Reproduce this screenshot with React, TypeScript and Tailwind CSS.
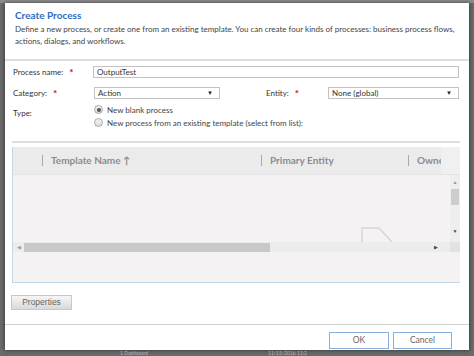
import React from "react"

const font = { fontFamily: 'Lato, "Open Sans", sans-serif' }

function Asterisk() {
  return <span className="ml-[6px] text-[10px] font-bold leading-none text-[#d01010]">*</span>
}

function SelectBox({ value, width }: { value: string; width: string }) {
  return (
    <div
      className={`flex h-[12px] items-center justify-between border border-[#c2c2c2] bg-white pl-[3px] pr-[6px] ${width}`}
    >
      <span className="text-[8px] leading-none text-[#333]">{value}</span>
      <span className="text-[6px] leading-none text-[#222]">▼</span>
    </div>
  )
}

function Radio({ checked, label }: { checked?: boolean; label: string }) {
  return (
    <div className="flex h-[13px] items-center">
      <span className="flex h-[9px] w-[9px] items-center justify-center rounded-full border border-[#a8a8a8] bg-gradient-to-b from-[#f4f4f4] to-[#dcdcdc]">
        {checked && <span className="h-[4px] w-[4px] rounded-full bg-[#555]" />}
      </span>
      <span className="ml-[4px] text-[8px] leading-none text-[#444]">{label}</span>
    </div>
  )
}

function HeaderCol({ label, width }: { label: string; width: string }) {
  return (
    <div className={`flex shrink-0 items-center ${width}`}>
      <span className="h-[11px] w-px bg-[#a9a9a9]" />
      <span className="ml-[8px] whitespace-nowrap text-[10px] font-bold text-[#8c8c8c]">{label}</span>
    </div>
  )
}

export default function App() {
  return (
    <div className="relative h-[356px] w-[474px] overflow-hidden bg-[#6a6a6a]" style={font}>
      {/* backdrop strip */}
      <div className="h-[3px] bg-[#8c8c8c]" />

      <div className="ml-[5px] flex h-[347px] w-[464px] flex-col bg-white shadow-[0_0_4px_rgba(0,0,0,0.6)]">
        {/* Title */}
        <div className="pl-[10px] pt-[4px]">
          <div className="text-[10px] font-bold leading-[16px] text-[#2f6cc0]">Create Process</div>
          <div className="text-[8px] leading-[12px] text-[#444]">
            <div className="whitespace-nowrap">
              Define a new process, or create one from an existing template. You can create four kinds of processes: business process flows,
            </div>
            <div className="whitespace-nowrap">actions, dialogs, and workflows.</div>
          </div>
        </div>

        <div className="mt-[12px] h-[2px] bg-[#dedede]" />

        {/* Form */}
        <div className="mt-[5px] flex h-[12px] items-center pl-[8px] pr-[10px]">
          <div className="flex w-[80px] items-center text-[8px] text-[#333]">
            Process name:
            <Asterisk />
          </div>
          <div className="flex h-[12px] flex-1 items-center border border-[#c2c2c2] bg-white pl-[3px]">
            <span className="text-[8px] leading-none text-[#333]">OutputTest</span>
          </div>
        </div>

        <div className="mt-[9px] flex h-[12px] items-center pl-[8px] pr-[10px]">
          <div className="flex w-[81px] items-center text-[8px] text-[#333]">
            Category:
            <Asterisk />
          </div>
          <SelectBox value="Action" width="w-[126px]" />
          <div className="ml-[46px] flex w-[62px] items-center text-[8px] text-[#333]">
            Entity:
            <Asterisk />
          </div>
          <SelectBox value="None (global)" width="flex-1" />
        </div>

        <div className="mt-[4px] flex pl-[8px]">
          <div className="w-[81px] pt-[6px] text-[8px] leading-none text-[#333]">Type:</div>
          <div className="flex flex-col">
            <Radio checked label="New blank process" />
            <Radio label="New process from an existing template (select from list):" />
          </div>
        </div>

        <div className="ml-[7px] mr-[9px] mt-[12px] h-[2px] bg-[#dedede]" />

        {/* Grid */}
        <div className="ml-[7px] mr-[9px] mt-[4px] flex h-[136px] flex-col border-b border-l border-[#c4d6ea] bg-[#f4f2f2]">
          <div className="flex h-[28px] shrink-0 border-b border-[#e3e3e3] bg-[#ebebeb]">
            <div className="flex w-[428px] overflow-hidden pl-[29px]">
              <HeaderCol label="Template Name ↑" width="w-[219px]" />
              <HeaderCol label="Primary Entity" width="w-[147px]" />
              <HeaderCol label="Owner" width="w-[60px]" />
            </div>
            <div className="flex-1 bg-[#f1f0f0]" />
          </div>

          <div className="relative flex h-[67px] shrink-0">
            <div className="relative flex-1 overflow-hidden">
              <svg className="absolute left-[348px] top-[52px]" width="32" height="16" viewBox="0 0 32 16">
                <path d="M1 16V1h17l13 14" fill="none" stroke="#d6d6d6" strokeWidth="1.5" />
              </svg>
            </div>
            <div className="flex w-[10px] flex-col items-center bg-[#eeeeee] pt-[5px]">
              <span className="text-[5px] leading-none text-[#9a9a9a]">▲</span>
              <div className="mt-[4px] h-[16px] w-[8px] bg-[#cdcdcd]" />
              <span className="mt-[24px] text-[5px] leading-none text-[#444]">▼</span>
            </div>
          </div>

          <div className="flex h-[10px] shrink-0 items-center bg-[#ececec]">
            <span className="ml-[4px] text-[5px] leading-none text-[#9a9a9a]">◀</span>
            <div className="ml-[3px] h-[9px] w-[246px] bg-[#c8c8c8]" />
            <div className="flex-1" />
            <span className="mr-[12px] text-[5px] leading-none text-[#444]">▶</span>
            <div className="h-[10px] w-[10px] bg-[#e2e2e2]" />
          </div>
        </div>

        {/* Properties */}
        <div className="ml-[6px] mt-[12px] flex h-[15px] w-[61px] items-center justify-center border border-[#c8c8c8] bg-gradient-to-b from-[#f6f6f6] to-[#d9d9d9]">
          <span className="text-[8.5px] leading-none text-[#666]" style={{ fontFamily: '"Liberation Sans", Arial, sans-serif' }}>
            Properties
          </span>
        </div>

        <div className="mt-[14px] h-px bg-[#cfcfcf]" />

        {/* Footer */}
        <div className="mr-[17px] mt-[7px] flex justify-end gap-[4px]">
          <button className="flex h-[17px] w-[60px] items-center justify-center border border-[#88aee0] bg-white text-[8.5px] text-[#666]">
            OK
          </button>
          <button className="flex h-[17px] w-[59px] items-center justify-center border border-[#88aee0] bg-white text-[8.5px] text-[#666]">
            Cancel
          </button>
        </div>
      </div>

      <div className="flex h-[6px] gap-[120px] overflow-hidden pl-[120px] text-[5px] leading-[6px] text-[#b5b5b5]">
        <span>1 Dashboard</span>
        <span>11/15/2016 11:2</span>
      </div>
    </div>
  )
}
